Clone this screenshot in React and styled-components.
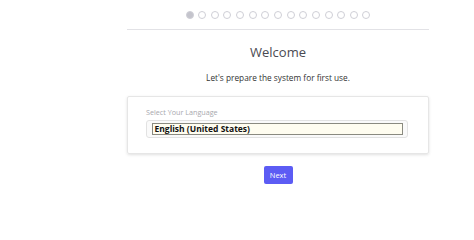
import React from "react";
import styled, { createGlobalStyle } from "styled-components";

const Global = createGlobalStyle`
  html, body { margin: 0; padding: 0; background: #fff; }
  body { font-family: "Open Sans", "Noto Sans", sans-serif; }
`;

const Page = styled.div`
  width: 474px;
  height: 240px;
  padding-left: 127px;
  box-sizing: border-box;
`;

const Column = styled.div`
  width: 302px;
  display: flex;
  flex-direction: column;
  align-items: center;
`;

const Steps = styled.div`
  display: flex;
  gap: 4.65px;
  padding-top: 11px;
  height: 8px;
  padding-bottom: 10px;
`;

const Dot = styled.span`
  width: 8px;
  height: 8px;
  box-sizing: border-box;
  border-radius: 50%;
  border: 1.3px solid #cfcfd6;
  background: ${(p) => (p.$active ? "#c4c4cc" : "#fff")};
`;

const Rule = styled.div`
  width: 100%;
  height: 1px;
  background: #e2e2e6;
`;

const Title = styled.h1`
  margin: 14px 0 0;
  font-size: 13px;
  font-weight: 400;
  color: #4a4a52;
  line-height: 16px;
`;

const Subtitle = styled.p`
  margin: 12px 0 0;
  font-size: 8.3px;
  color: #333;
  line-height: 12px;
`;

const Card = styled.div`
  align-self: stretch;
  margin-top: 12px;
  border: 1px solid #e6e6e6;
  border-radius: 2px;
  box-shadow: 0 1px 3px rgba(0, 0, 0, 0.12);
  padding: 10px 19px 15px 18px;
  display: flex;
  flex-direction: column;
`;

const Label = styled.label`
  font-size: 7.2px;
  color: #a8a8ae;
  line-height: 10px;
`;

const SelectWrap = styled.div`
  margin-top: 3px;
  width: 262px;
  height: 18px;
  box-sizing: border-box;
  border: 1px solid #e2e2e2;
  border-radius: 3px;
  background: #fafafa;
  padding: 2px 4px 2px 5px;
  display: flex;
`;

const Select = styled.div`
  flex: 1;
  border: 1px solid #8a8a80;
  background: #fffdf0;
  font-size: 8.5px;
  font-weight: 700;
  color: #111;
  line-height: 10px;
  padding-left: 1.5px;
`;

const Button = styled.button`
  margin-top: 12px;
  width: 29px;
  height: 18px;
  border: none;
  border-radius: 2px;
  background: #5c5cf4;
  color: #fff;
  font-family: inherit;
  font-size: 7.5px;
  padding: 0;
`;

export default function App() {
  return (
    <Page>
      <Global />
      <Column>
        <Steps>
          {Array.from({ length: 15 }).map((_, i) => (
            <Dot key={i} $active={i === 0} />
          ))}
        </Steps>
        <Rule />
        <Title>Welcome</Title>
        <Subtitle>Let's prepare the system for first use.</Subtitle>
        <Card>
          <Label>Select Your Language</Label>
          <SelectWrap>
            <Select>English (United States)</Select>
          </SelectWrap>
        </Card>
        <Button>Next</Button>
      </Column>
    </Page>
  );
}
